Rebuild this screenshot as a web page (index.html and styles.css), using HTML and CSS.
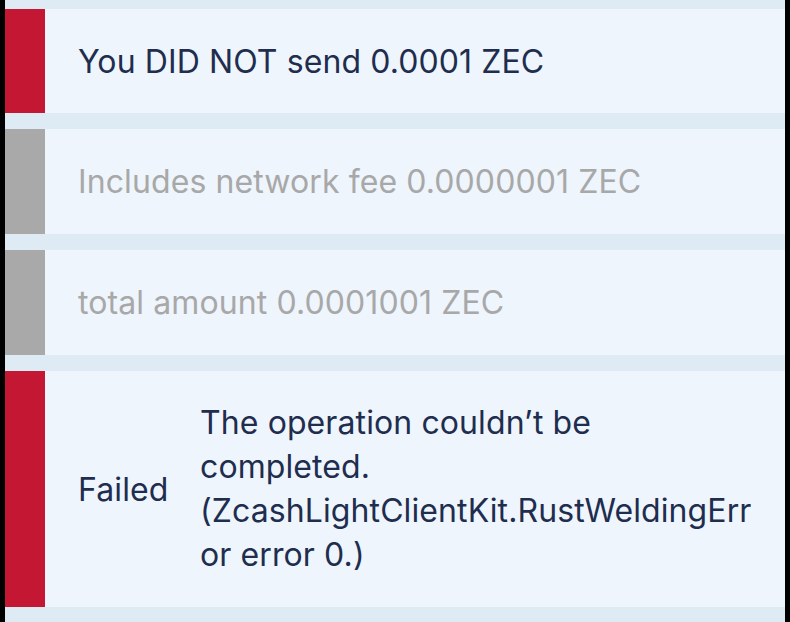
FILE: index.html
```html
<!DOCTYPE html>
<html>
<head>
<meta charset="utf-8">
<link rel="stylesheet" href="styles.css">
</head>
<body>
<div class="screen">
  <div class="list">
    <div class="row">
      <div class="bar bar-red"></div>
      <div class="content"><span class="text">You DID NOT send 0.0001 ZEC</span></div>
    </div>
    <div class="row">
      <div class="bar bar-gray"></div>
      <div class="content"><span class="text muted">Includes network fee 0.0000001 ZEC</span></div>
    </div>
    <div class="row">
      <div class="bar bar-gray"></div>
      <div class="content"><span class="text muted">total amount 0.0001001 ZEC</span></div>
    </div>
    <div class="row row-tall">
      <div class="bar bar-red"></div>
      <div class="content split">
        <span class="text label">Failed</span>
        <span class="text message">The operation couldn’t be completed. (ZcashLightClientKit.RustWeldingError error 0.)</span>
      </div>
    </div>
  </div>
</div>
</body>
</html>
```

FILE: styles.css
```css
html, body {
  margin: 0;
  padding: 0;
  background: #000;
}
.screen {
  width: 790px;
  height: 622px;
  box-sizing: border-box;
  padding: 0 5px;
  background: #000;
  overflow: hidden;
}
.list {
  height: 100%;
  background: #deebf5;
  padding-top: 9px;
  box-sizing: border-box;
  display: flex;
  flex-direction: column;
  gap: 16px;
}
.row {
  display: flex;
  height: 105px;
  background: #eef5fc;
}
.row:first-child {
  height: 104px;
}
.row-tall {
  height: 236px;
}
.bar {
  width: 40px;
  flex: none;
}
.bar-red { background: #c41733; }
.bar-gray { background: #a9a9a9; }
.content {
  flex: 1;
  display: flex;
  align-items: center;
  padding-left: 33px;
}
.text {
  font-family: Inter, "Noto Sans", sans-serif;
  font-size: 32px;
  color: #1f2d4e;
  letter-spacing: 0.1px;
}
.muted {
  color: #a8a8a8;
}
.split {
  gap: 34px;
}
.label {
  flex: none;
  width: 88px;
}
.message {
  width: 555px;
  line-height: 44px;
  overflow-wrap: anywhere;
}
```
